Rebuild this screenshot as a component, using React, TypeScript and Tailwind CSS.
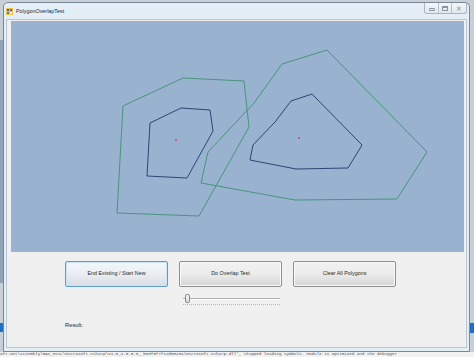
import React from "react";

const leftOuter = "123,106 183,78 244,81 249,127 199,216 117,213";
const leftInner = "150,123 181,108 210,110 213,131 187,178 147,176";
const rightOuter = "282,64 327,50 427,152 397,199 295,200 201,183 208,152 254,103";
const rightInner = "291,101 312,94 362,145 348,168 296,169 250,160 253,145 275,122";

function Btn({ label, focused }: { label: string; focused?: boolean }) {
  return (
    <div
      className={
        "w-[103px] h-[26px] rounded-[2px] border flex items-center justify-center bg-gradient-to-b " +
        (focused
          ? "border-[#5d9ccd] from-[#f4f7fa] via-[#eaeef2] to-[#d7dde3] shadow-[inset_0_0_0_1px_#c8e4f6]"
          : "border-[#8e8e8e] from-[#f2f2f2] via-[#ebebeb] to-[#d6d6d6] shadow-[inset_0_0_0_1px_#fbfbfb]")
      }
    >
      <span className="text-[5.4px] text-[#2a2a2a] font-['Liberation_Sans',sans-serif] leading-none">{label}</span>
    </div>
  );
}

export default function App() {
  return (
    <div className="w-[474px] h-[357px] overflow-hidden relative bg-[#c8cfd7] font-['Liberation_Sans',sans-serif]">
      {/* desktop bits behind */}
      <div className="absolute left-0 top-[40px] w-[3px] h-[243px] bg-[#8fa2b7]" />
      <div className="absolute left-0 top-[323px] w-[3px] h-[9px] bg-[#1f6fc4]" />
      <div className="absolute right-0 top-[323px] w-[4px] h-[10px] bg-[#1f6fc4]" />

      {/* window */}
      <div className="absolute left-[3px] top-[2px] w-[467px] h-[350px] border border-[#7a8794] rounded-t-[5px] bg-[#e4eef7] flex flex-col pl-[2px] pr-[2px] pb-[3px]">
        {/* title bar */}
        <div className="h-[16px] shrink-0 flex items-center relative">
          <svg width="7" height="7" viewBox="0 0 7 7" className="ml-[0px] mt-[1px]">
            <rect x="0" y="0" width="7" height="7" fill="#e6c24a" />
            <rect x="1" y="1" width="2" height="2" fill="#3a6fb0" />
            <rect x="4" y="1" width="2" height="2" fill="#c94a3a" />
            <rect x="1" y="4" width="2" height="2" fill="#4a9a4a" />
            <rect x="4" y="4" width="2" height="2" fill="#f4f4f4" />
          </svg>
          <span className="ml-[3px] text-[5.4px] text-[#1e2a36] leading-none mt-[1px]">PolygonOverlapTest</span>
          <div className="absolute right-[0px] top-[0px] h-[11px] w-[43px] border border-[#a9b4bf] border-t-0 rounded-b-[3px] bg-gradient-to-b from-[#f3f7fa] to-[#e1e8ee] flex">
            <div className="w-[14px] flex items-center justify-center border-r border-[#b7c1ca]">
              <div className="w-[6px] h-[3px] border border-[#8a949e] rounded-[1px] mt-[2px]" />
            </div>
            <div className="w-[13px] flex items-center justify-center border-r border-[#b7c1ca]">
              <div className="w-[6px] h-[5px] border border-[#8a949e] border-t-2" />
            </div>
            <div className="flex-1 flex items-center justify-center">
              <span className="text-[7px] leading-none text-[#8a949e]">✕</span>
            </div>
          </div>
        </div>
        {/* client area */}
        <div className="flex-1 bg-[#f0f0f0] border border-[#b9c6d3] flex flex-col pl-[4px] pr-[1px] pt-[1px]">
          <div className="w-[453px] h-[231px] bg-[#98b2cf] shrink-0">
            <svg width="453" height="231" viewBox="11 21 453 231">
              <polygon points={leftOuter} fill="none" stroke="#3f9270" strokeWidth="0.9" />
              <polygon points={rightOuter} fill="none" stroke="#3f9270" strokeWidth="0.9" />
              <polygon points={leftInner} fill="none" stroke="#2c4675" strokeWidth="1" />
              <polygon points={rightInner} fill="none" stroke="#2c4675" strokeWidth="1" />
              <circle cx="176" cy="140" r="1" fill="#d2457a" />
              <circle cx="299" cy="138" r="1" fill="#d2457a" />
            </svg>
          </div>
          <div className="flex gap-[11px] pl-[54px] mt-[9px]">
            <Btn label="End Existing / Start New" focused />
            <Btn label="Do Overlap Test" />
            <Btn label="Clear All Polygons" />
          </div>
          <div className="ml-[172px] mt-[7px] w-[97px] h-[11px] relative">
            <div className="absolute left-0 right-0 top-[4px] h-[2px] border-t border-[#b0b0b0] border-b border-b-[#ffffff]" />
            <div className="absolute left-0 right-0 top-[10px] h-[1px] border-t border-dotted border-[#b8b8b8]" />
            <div className="absolute left-[2px] top-[0px] w-[5px] h-[9px] rounded-[2px] border border-[#8a8a8a] bg-gradient-to-b from-[#f8f8f8] to-[#dcdcdc]" />
          </div>
          <div className="ml-[54px] mt-[18px] text-[5.8px] text-[#2a2a2a] leading-none">Result:</div>
        </div>
      </div>

      {/* console strip */}
      <div className="absolute left-0 top-[352px] w-[474px] h-[5px] bg-[#f2f2f2] overflow-hidden">
        <div className="whitespace-nowrap text-[4.2px] leading-[5px] text-[#555] font-['Liberation_Mono',monospace]">
          oft.Net\assembly\GAC_MSIL\Microsoft.CSharp\v4.0_4.0.0.0__b03f5f7f11d50a3a\Microsoft.CSharp.dll', Skipped loading symbols. Module is optimized and the debugger
        </div>
      </div>
    </div>
  );
}
